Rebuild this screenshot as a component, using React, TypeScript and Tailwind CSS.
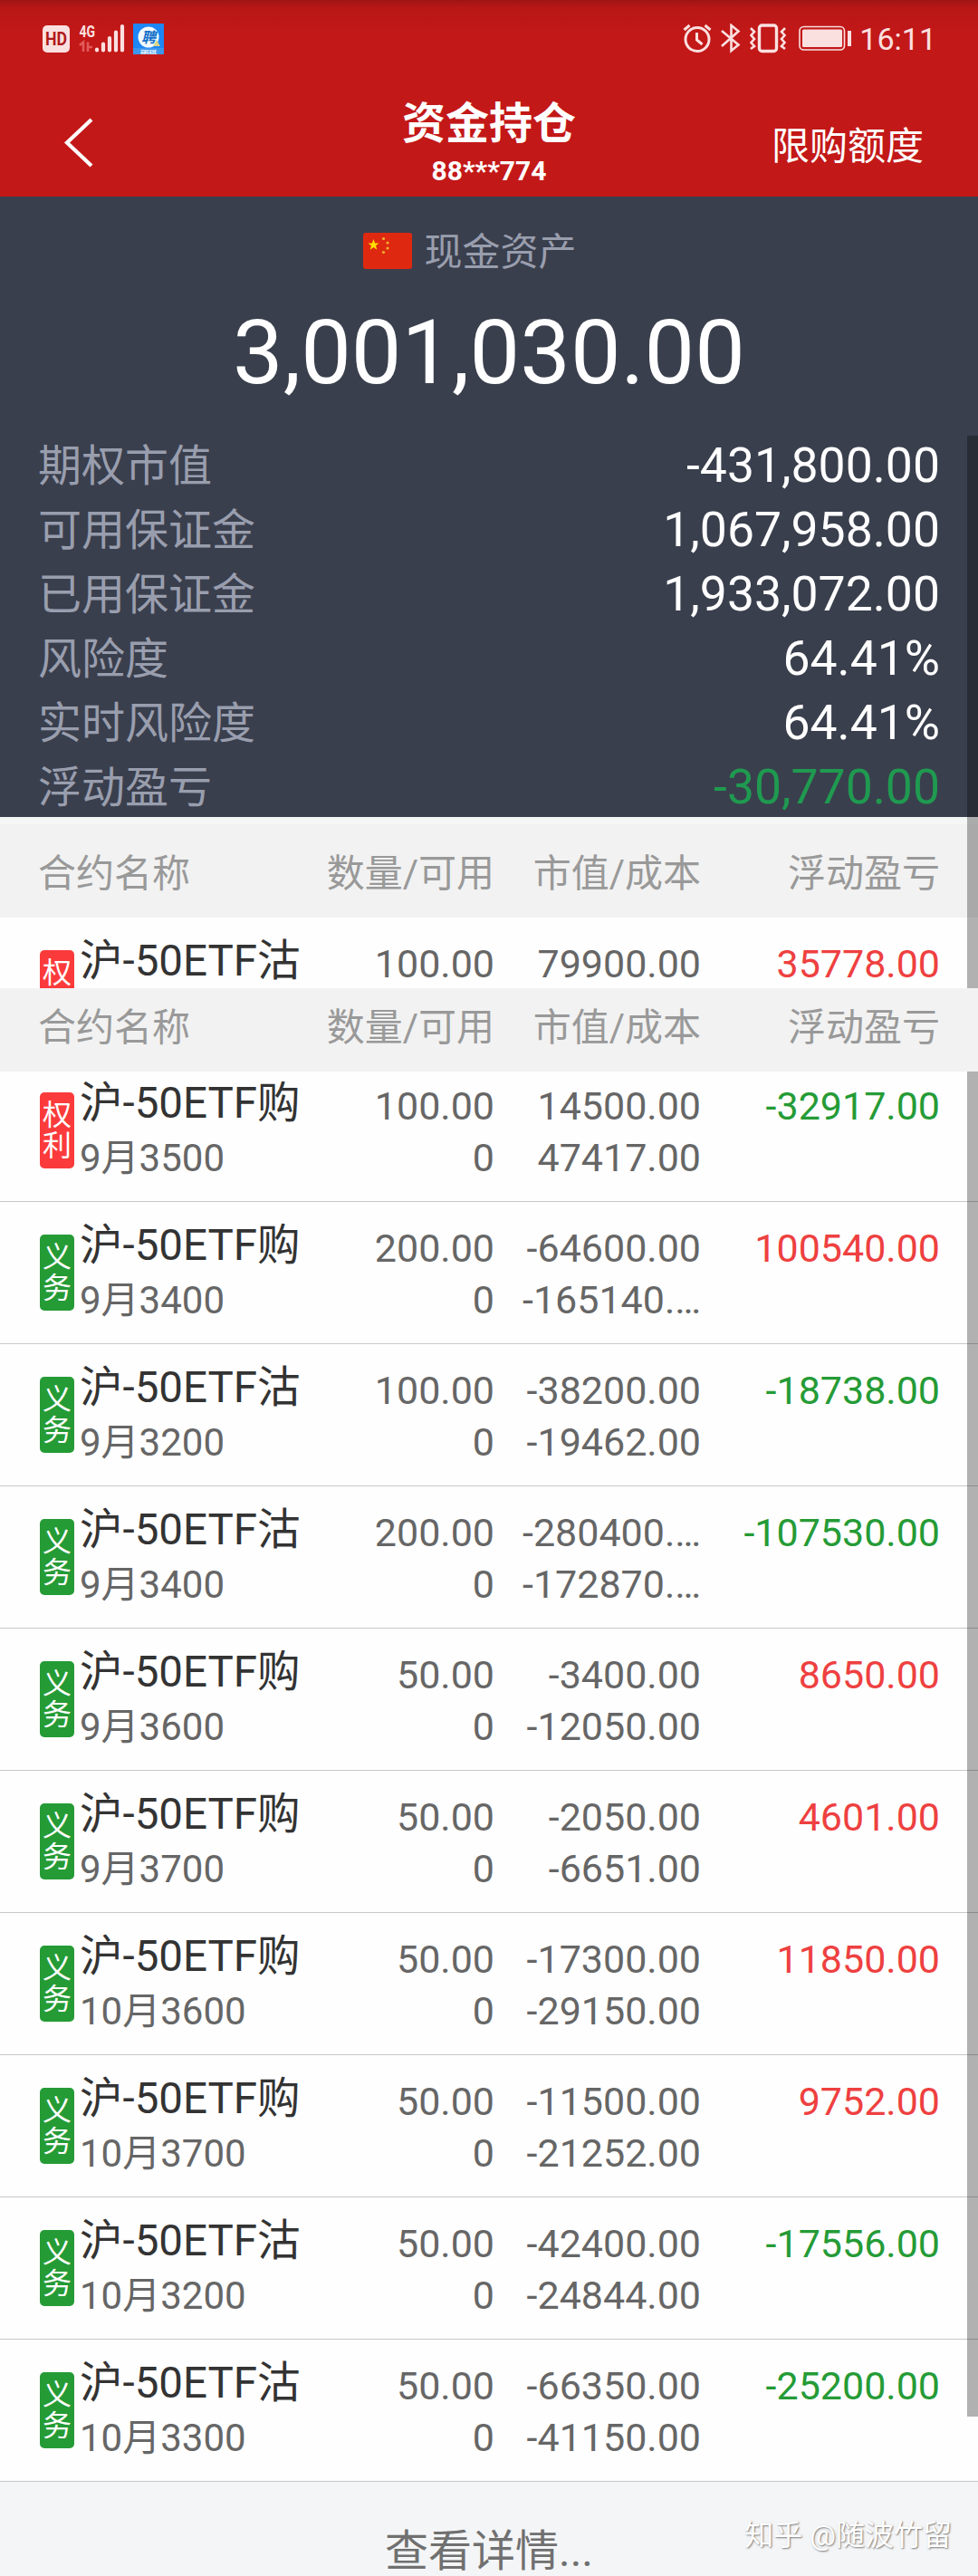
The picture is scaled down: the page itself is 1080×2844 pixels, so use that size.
import { clsx } from "clsx";

type Position = {
  name: string;
  term: string;
  side: string;
  qty: string;
  avail: string;
  value: string;
  cost: string;
  pnl: string;
};

const SUMMARY = [
  { label: "期权市值", value: "-431,800.00" },
  { label: "可用保证金", value: "1,067,958.00" },
  { label: "已用保证金", value: "1,933,072.00" },
  { label: "风险度", value: "64.41%" },
  { label: "实时风险度", value: "64.41%" },
  { label: "浮动盈亏", value: "-30,770.00", loss: true },
];

// the first row is half hidden under the pinned column titles
const POSITIONS: Position[] = [
  { name: "沪-50ETF沽", term: "", side: "权", qty: "100.00", avail: "", value: "79900.00", cost: "", pnl: "35778.00" },
  { name: "沪-50ETF购", term: "9月3500", side: "权利", qty: "100.00", avail: "0", value: "14500.00", cost: "47417.00", pnl: "-32917.00" },
  { name: "沪-50ETF购", term: "9月3400", side: "义务", qty: "200.00", avail: "0", value: "-64600.00", cost: "-165140.…", pnl: "100540.00" },
  { name: "沪-50ETF沽", term: "9月3200", side: "义务", qty: "100.00", avail: "0", value: "-38200.00", cost: "-19462.00", pnl: "-18738.00" },
  { name: "沪-50ETF沽", term: "9月3400", side: "义务", qty: "200.00", avail: "0", value: "-280400.…", cost: "-172870.…", pnl: "-107530.00" },
  { name: "沪-50ETF购", term: "9月3600", side: "义务", qty: "50.00", avail: "0", value: "-3400.00", cost: "-12050.00", pnl: "8650.00" },
  { name: "沪-50ETF购", term: "9月3700", side: "义务", qty: "50.00", avail: "0", value: "-2050.00", cost: "-6651.00", pnl: "4601.00" },
  { name: "沪-50ETF购", term: "10月3600", side: "义务", qty: "50.00", avail: "0", value: "-17300.00", cost: "-29150.00", pnl: "11850.00" },
  { name: "沪-50ETF购", term: "10月3700", side: "义务", qty: "50.00", avail: "0", value: "-11500.00", cost: "-21252.00", pnl: "9752.00" },
  { name: "沪-50ETF沽", term: "10月3200", side: "义务", qty: "50.00", avail: "0", value: "-42400.00", cost: "-24844.00", pnl: "-17556.00" },
  { name: "沪-50ETF沽", term: "10月3300", side: "义务", qty: "50.00", avail: "0", value: "-66350.00", cost: "-41150.00", pnl: "-25200.00" },
];

function StatusBar() {
  return (
    <div className="flex h-[80px] items-start justify-between pl-[47px] pr-[46px] pt-[26px] text-[#fbe0e0]">
      <div className="flex">
        <svg className="mt-[2px]" width="30" height="30" viewBox="0 0 30 30">
          <rect width="30" height="30" rx="5" fill="#fbe0e0" />
          <text x="3" y="22" fontSize="20" fontWeight="700" textLength="24" lengthAdjust="spacingAndGlyphs" fill="#b01a1a">HD</text>
        </svg>
        <svg className="ml-[10px] overflow-visible" width="52" height="34" viewBox="0 0 52 34">
          <text x="0.500" y="14.500" fontSize="19" fontWeight="700" textLength="17.500" lengthAdjust="spacingAndGlyphs" fill="#fbe0e0">4G</text>
          <path d="M1 24L5 20.500V31M10 20.500V31M10 26H15" fill="none" stroke="#e25a5a" strokeWidth="2.600" />
          <g stroke="#fbe0e0" strokeWidth="4.200" strokeLinecap="round">
            <path d="M20 28.500V29.500M27 22.500V29.500M34 16V29.500M41 9.500V29.500M48 3V29.500" />
          </g>
        </svg>
        <svg className="ml-[8px]" width="34" height="34" viewBox="0 0 34 34">
          <rect width="34" height="34" fill="#1e86f5" />
          <circle cx="17" cy="15" r="11.500" fill="#f2fbff" />
          <text x="17" y="21" fontSize="16" fontWeight="700" fontStyle="italic" textAnchor="middle" fill="#1670c8">聘</text>
          <path d="M26 18L30 25H22Z" fill="#d8d488" />
          <rect y="27" width="34" height="7" fill="#3c96ee" />
          <text x="8" y="32.500" fontSize="5" fontWeight="700" textLength="18" fill="#fff">前程无忧</text>
        </svg>
      </div>
      <div className="flex">
        <svg width="190" height="34" viewBox="0 0 190 34" fill="none" stroke="#fbe0e0" strokeWidth="3">
          <circle cx="16" cy="17.500" r="13" />
          <path d="M15.500 10V18L21.500 23M1.500 7L7.500 2M24.500 2L30.500 7" />
          <path d="M43 8L61.500 23.500L53.500 30V2L61.500 8.500L43 25" strokeWidth="2.600" />
          <rect x="84.500" y="2" width="19" height="28.500" rx="3" strokeWidth="3.400" />
          <path d="M75 5L79 9L75.500 13L79 17L75.500 21L79 25L75 28M113 5L109 9L112.500 13L109 17L112.500 21L109 25L113 28" strokeWidth="2.600" />
          <rect x="129" y="3.500" width="49.500" height="25.500" rx="4.500" strokeWidth="1.600" />
          <rect x="132" y="6.500" width="44" height="19.500" rx="1.500" fill="#fbe0e0" stroke="none" />
          <path d="M184 8V25" strokeWidth="4" />
        </svg>
        <span className="ml-[5px] mt-[-4px] text-[34px] leading-[42px]">16:11</span>
      </div>
    </div>
  );
}

function NavBar() {
  return (
    <div className="grid h-[137px] grid-cols-3 text-white">
      <svg className="ml-[70px] mt-[48px]" width="36" height="60" viewBox="0 0 36 60">
        <path d="M31 4L4 29.500L31 55" fill="none" stroke="#fff" strokeWidth="4.200" />
      </svg>
      <div className="text-center font-bold">
        <h1 className="mt-[29px] text-[48px] leading-[56px]">资金持仓</h1>
        <p className="mt-[6px] text-[30px] leading-[36px]">88***774</p>
      </div>
      <button className="mr-[60px] mt-[54px] h-[56px] text-right text-[42px] leading-[56px]">限购额度</button>
    </div>
  );
}

function ChinaFlag() {
  return (
    <svg width="54" height="40" viewBox="0 0 54 40">
      <rect width="54" height="40" rx="3" fill="#de2910" />
      <path d="M11.500 7L13.100 11.500H17.500L14 14.200L15.300 18.700L11.500 16L7.700 18.700L9 14.200L5.500 11.500H9.900Z" fill="#ffde00" />
      <g fill="#f0b030">
        <circle cx="22.500" cy="6.500" r="1.600" />
        <circle cx="27" cy="11" r="1.600" />
        <circle cx="27" cy="17" r="1.600" />
        <circle cx="22.500" cy="21.500" r="1.600" />
      </g>
    </svg>
  );
}

function TableHead({ className }: { className?: string }) {
  return (
    <div className={clsx("flex bg-[#f2f2f2] pl-[42px] pr-[42px] text-[42px] leading-[56px] text-[#999]", className)}>
      <div className="w-[300px]">合约名称</div>
      <div className="w-[204px] text-right">数量/可用</div>
      <div className="w-[228px] text-right">市值/成本</div>
      <div className="flex-1 text-right">浮动盈亏</div>
    </div>
  );
}

function PositionRow({ row }: { row: Position }) {
  return (
    <div className="flex h-[157px] border-b border-[#c8c8c8] bg-[#fefefe] pl-[44px] pr-[42px] pt-[23px] text-[43px] leading-[57px] text-[#666]">
      <div
        className={clsx(
          "mt-[13px] flex h-[84px] w-[38px] justify-center rounded-[5px] pt-[8px] text-center text-[32px] leading-[34px] text-white",
          row.side.startsWith("权") ? "bg-[#fb3b3b]" : "bg-[#259b36]",
        )}
      >
        <span className="w-[32px] break-all">{row.side}</span>
      </div>
      <div className="ml-[6px] w-[254px] whitespace-nowrap">
        <div className="mt-[-2px] text-[47.500px] leading-[54px] text-[#333]">{row.name}</div>
        <div className="mt-[5px] text-[42px]">{row.term}</div>
      </div>
      <div className="w-[204px] text-right">
        <div>{row.qty}</div>
        <div>{row.avail}</div>
      </div>
      <div className="w-[228px] text-right">
        <div>{row.value}</div>
        <div>{row.cost}</div>
      </div>
      <div className={clsx("flex-1 text-right", row.pnl.startsWith("-") ? "text-[#259b36]" : "text-[#ee4040]")}>
        {row.pnl}
      </div>
    </div>
  );
}

export default function App() {
  return (
    <div className="relative h-[2844px] w-[1080px] overflow-hidden bg-[#f4f5f7] font-['Roboto','Noto_Sans_CJK_SC',sans-serif]">
      <header className="h-[217px] bg-[#c31818] bg-linear-to-b from-[#a01414] via-[#b81717] via-[4%] to-[#c31818] to-[18%]">
        <StatusBar />
        <NavBar />
      </header>

      <section className="h-[685px] bg-[#3a3f4d] px-[42px] pt-[34px]">
        <div className="flex h-[56px] items-center justify-center gap-[13px] pr-[42px] text-[42px] leading-[56px] text-[#999eae]">
          <div className="mt-[-4px]">
            <ChinaFlag />
          </div>
          现金资产
        </div>
        <div className="mt-[22px] text-center text-[99px] leading-[120px] text-white">3,001,030.00</div>
        <dl className="mt-[30px]">
          {SUMMARY.map((item) => (
            <div key={item.label} className="flex h-[71px] items-center justify-between">
              <dt className="text-[48px] text-[#999eae]">{item.label}</dt>
              <dd className={clsx("text-[53.500px]", item.loss ? "text-[#1f9a50]" : "text-white")}>{item.value}</dd>
            </div>
          ))}
        </dl>
      </section>

      <div className="h-[8px] bg-[#f5f7f7]" />
      <TableHead className="h-[103px] pt-[27px]" />
      <div>
        {POSITIONS.map((row, i) => (
          <PositionRow key={i} row={row} />
        ))}
      </div>

      <footer className="flex h-[104px] justify-center pt-[43px] text-[48px] leading-[68px] text-[#707070]">
        查看详情...
      </footer>

      <div className="absolute right-0 top-[481px] h-[2187px] w-[12px] bg-black/30" />
      {/* pinned column titles */}
      <TableHead className="absolute left-0 top-[1091px] h-[92px] w-full pt-[16px]" />
      <div className="absolute bottom-[25px] right-[29px] text-[32px] leading-[40px] text-white [text-shadow:1px_1px_2px_#777]">
        知乎 @随波竹留
      </div>
    </div>
  );
}
